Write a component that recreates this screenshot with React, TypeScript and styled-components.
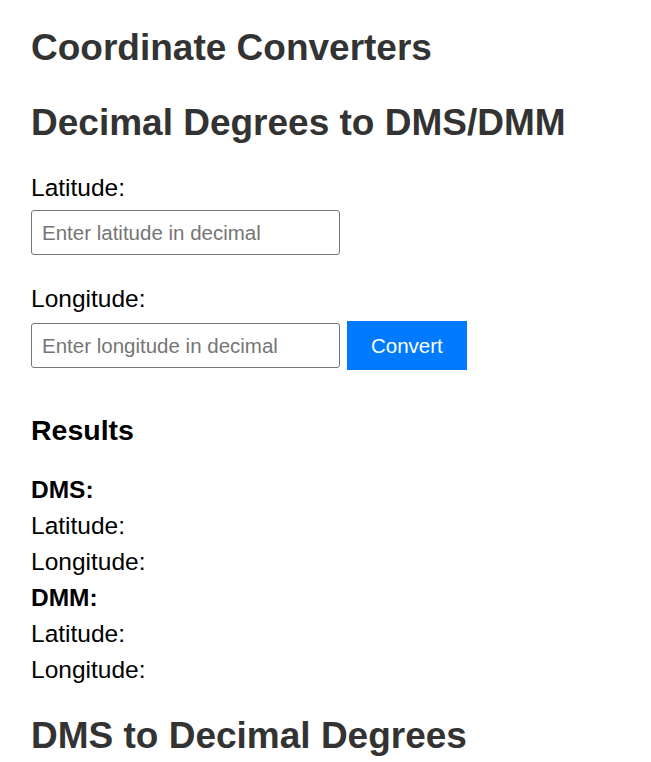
import styled, { createGlobalStyle } from "styled-components";

const GlobalStyle = createGlobalStyle`
  body {
    margin: 0;
    font-family: "Liberation Sans", Arial, sans-serif;
    background: #fff;
    color: #000;
  }
`;

const Page = styled.div`
  padding: 27px 31px 0;
`;

const Title = styled.h1`
  font-size: 37px;
  font-weight: 700;
  color: #333;
  margin: 0 0 33px;
`;

const Section = styled.section`
  margin-bottom: 27px;
`;

const SectionTitle = styled.h2`
  font-size: 37px;
  font-weight: 700;
  color: #333;
  margin: 0 0 30px;
`;

const Field = styled.div<{ $last?: boolean }>`
  margin-bottom: ${(p) => (p.$last ? "0" : "30px")};
`;

const Label = styled.label`
  display: block;
  font-size: 24.5px;
  margin-bottom: 8px;
`;

const Row = styled.div`
  display: flex;
  align-items: center;
  gap: 7px;
`;

const Input = styled.input`
  box-sizing: border-box;
  width: 309px;
  height: 45px;
  padding: 0 10px;
  font-family: inherit;
  font-size: 20.5px;
  border: 1px solid #767676;
  border-radius: 3px;
  &::placeholder {
    color: #757575;
  }
`;

const Button = styled.button`
  height: 49px;
  padding: 0 24px;
  border: none;
  background: #007bff;
  color: #fff;
  font-family: inherit;
  font-size: 20.5px;
  cursor: pointer;
`;

const Results = styled.div`
  margin-top: 44px;
`;

const ResultsTitle = styled.h3`
  font-size: 28.5px;
  font-weight: 700;
  margin: 0 0 25px;
`;

const Line = styled.div<{ $bold?: boolean }>`
  font-size: 24.5px;
  line-height: 36px;
  font-weight: ${(p) => (p.$bold ? 700 : 400)};
`;

export default function App() {
  return (
    <Page>
      <GlobalStyle />
      <Title>Coordinate Converters</Title>
      <Section>
        <SectionTitle>Decimal Degrees to DMS/DMM</SectionTitle>
        <Field>
          <Label htmlFor="lat">Latitude:</Label>
          <Input id="lat" type="text" placeholder="Enter latitude in decimal" />
        </Field>
        <Field $last>
          <Label htmlFor="lon">Longitude:</Label>
          <Row>
            <Input id="lon" type="text" placeholder="Enter longitude in decimal" />
            <Button>Convert</Button>
          </Row>
        </Field>
        <Results>
          <ResultsTitle>Results</ResultsTitle>
          <Line $bold>DMS:</Line>
          <Line>Latitude: </Line>
          <Line>Longitude: </Line>
          <Line $bold>DMM:</Line>
          <Line>Latitude: </Line>
          <Line>Longitude: </Line>
        </Results>
      </Section>
      <SectionTitle>DMS to Decimal Degrees</SectionTitle>
    </Page>
  );
}
